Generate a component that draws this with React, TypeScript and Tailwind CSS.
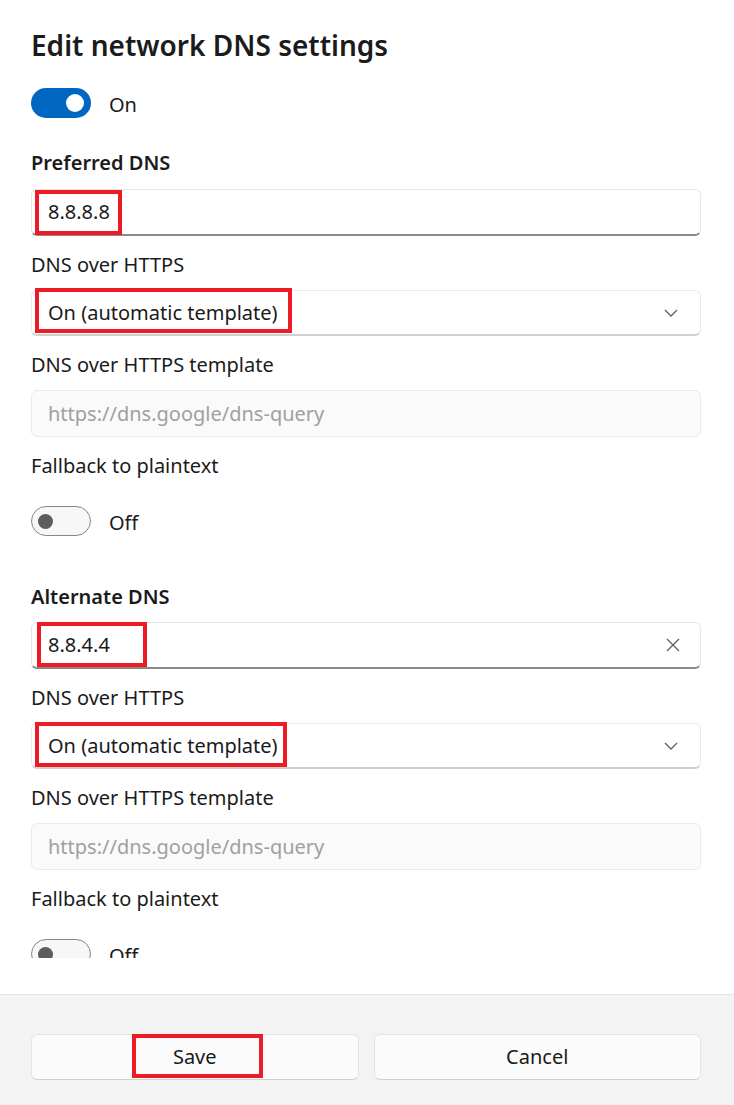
import React from 'react';

function Toggle({ on }: { on: boolean }) {
  return (
    <div className="flex items-center gap-[18px] h-[30px]">
      {on ? (
        <div className="w-[60px] h-[30px] rounded-full bg-[#0067c0] flex items-center justify-end pr-[7px]">
          <div className="w-[18px] h-[18px] rounded-full bg-white" />
        </div>
      ) : (
        <div className="w-[60px] h-[30px] rounded-full bg-[#f7f7f7] border-[1.5px] border-[#878787] flex items-center pl-[6px]">
          <div className="w-[15px] h-[15px] rounded-full bg-[#5d5d5d]" />
        </div>
      )}
      <span className="text-[20px] text-[#1a1a1a] pt-[3px]">{on ? 'On' : 'Off'}</span>
    </div>
  );
}

function Label({ children, bold }: { children: React.ReactNode; bold?: boolean }) {
  return (
    <div className={`h-[30px] flex items-center text-[20px] text-[#1b1b1b] ${bold ? 'font-semibold' : ''}`}>
      {children}
    </div>
  );
}

function RedBox({ className }: { className: string }) {
  return <div className={`absolute border-4 border-[#ed1c24] pointer-events-none ${className}`} />;
}

function TextInput({ value, clear, box }: { value: string; clear?: boolean; box: string }) {
  return (
    <div className="relative h-[47px] bg-white rounded-[6px] border border-[#e6e6e6] border-b-2 border-b-[#8a8a8a] flex items-center justify-between pl-[16px] pr-[20px]">
      <span className="text-[20px] text-[#1a1a1a]">{value}</span>
      {clear && (
        <svg width="14" height="14" viewBox="0 0 14 14" className="text-[#5f5f5f]">
          <path d="M1 1L13 13M13 1L1 13" stroke="currentColor" strokeWidth="1.3" />
        </svg>
      )}
      <RedBox className={box} />
    </div>
  );
}

function Select({ value, box }: { value: string; box: string }) {
  return (
    <div className="relative h-[46px] bg-white rounded-[6px] border border-[#ebebeb] border-b-[#d0d0d0] border-b-2 flex items-center justify-between pl-[16px] pr-[22px]">
      <span className="text-[20px] text-[#1a1a1a]">{value}</span>
      <svg width="14" height="8" viewBox="0 0 14 8" className="text-[#5f5f5f]">
        <path d="M1 1L7 7L13 1" stroke="currentColor" strokeWidth="1.3" fill="none" />
      </svg>
      <RedBox className={box} />
    </div>
  );
}

function DisabledInput() {
  return (
    <div className="h-[47px] bg-[#fafafa] rounded-[6px] border border-[#ebebeb] flex items-center pl-[16px]">
      <span className="text-[20px] text-[#a0a0a0]">https://dns.google/dns-query</span>
    </div>
  );
}

export default function App() {
  return (
    <div
      className="w-[734px] h-[1105px] bg-white flex flex-col overflow-hidden"
      style={{ fontFamily: '"Noto Sans", "Open Sans", sans-serif' }}
    >
      <div className="pb-[36px]">
        <div className="h-[958px] overflow-hidden pl-[31px] pr-[33px] pt-[27px]">
          <h1 className="h-[36px] flex items-center text-[28px] font-semibold text-[#1b1b1b]">
            Edit network DNS settings
          </h1>
          <div className="mt-[25px]">
            <Toggle on />
          </div>

          <div className="mt-[30px]">
            <Label bold>Preferred DNS</Label>
            <div className="mt-[11px]">
              <TextInput value="8.8.8.8" box="left-[3px] top-0 bottom-[-1px] w-[87px]" />
            </div>
          </div>
          <div className="mt-[14px]">
            <Label>DNS over HTTPS</Label>
            <div className="mt-[10px]">
              <Select value="On (automatic template)" box="left-[3px] top-[-3px] bottom-[1px] w-[257px]" />
            </div>
          </div>
          <div className="mt-[14px]">
            <Label>DNS over HTTPS template</Label>
            <div className="mt-[10px]">
              <DisabledInput />
            </div>
          </div>
          <div className="mt-[14px]">
            <Label>Fallback to plaintext</Label>
            <div className="mt-[25px]">
              <Toggle on={false} />
            </div>
          </div>

          <div className="mt-[46px]">
            <Label bold>Alternate DNS</Label>
            <div className="mt-[10px]">
              <TextInput value="8.8.4.4" clear box="left-[5px] top-[-1px] bottom-0 w-[110px]" />
            </div>
          </div>
          <div className="mt-[14px]">
            <Label>DNS over HTTPS</Label>
            <div className="mt-[10px]">
              <Select value="On (automatic template)" box="left-[3px] top-[-2px] bottom-[0px] w-[252px]" />
            </div>
          </div>
          <div className="mt-[14px]">
            <Label>DNS over HTTPS template</Label>
            <div className="mt-[10px]">
              <DisabledInput />
            </div>
          </div>
          <div className="mt-[14px]">
            <Label>Fallback to plaintext</Label>
            <div className="mt-[25px]">
              <Toggle on={false} />
            </div>
          </div>
        </div>
      </div>

      <div className="flex-1 bg-[#f3f3f3] border-t border-[#e5e5e5] pt-[39px] pl-[31px] pr-[33px]">
        <div className="grid grid-cols-2 gap-[15px]">
          <button className="relative h-[46px] rounded-[6px] bg-[#fbfbfb] border border-[#e5e5e5] border-b-[#d0d0d0] text-[20px] text-[#1a1a1a]">
            Save
            <RedBox className="left-[100px] top-[-1px] bottom-[1px] w-[131px]" />
          </button>
          <button className="h-[46px] rounded-[6px] bg-[#fbfbfb] border border-[#e5e5e5] border-b-[#d0d0d0] text-[20px] text-[#1a1a1a]">
            Cancel
          </button>
        </div>
      </div>
    </div>
  );
}
